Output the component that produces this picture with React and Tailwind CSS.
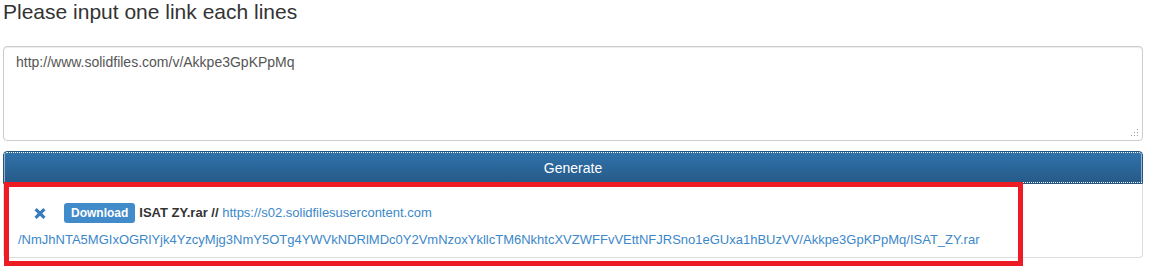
import React from "react";

const FONT = "font-['Liberation_Sans',Arial,sans-serif]";

function RemoveIcon() {
  return (
    <svg width="12" height="11" viewBox="0 0 12 11" className="shrink-0">
      <path d="M1.6 1.2 L10.4 9.8 M10.4 1.2 L1.6 9.8" stroke="#3a7bbd" strokeWidth="3.2" strokeLinecap="butt" fill="none" />
    </svg>
  );
}

function Grip() {
  return (
    <svg width="8" height="8" viewBox="0 0 8 8" className="absolute right-[4px] bottom-[4px] pointer-events-none">
      <g fill="#999">
        <rect x="6" y="0" width="1" height="1" />
        <rect x="3" y="3" width="1" height="1" />
        <rect x="6" y="3" width="1" height="1" />
        <rect x="0" y="6" width="1" height="1" />
        <rect x="3" y="6" width="1" height="1" />
        <rect x="6" y="6" width="1" height="1" />
      </g>
    </svg>
  );
}

export default function App() {
  return (
    <div className={`relative w-[1151px] h-[268px] bg-white pl-[3px] pr-[8px] ${FONT} text-[#333]`}>
      <h3 className="m-0 text-[21px] leading-[24px] font-normal text-[#333]">Please input one link each lines</h3>

      <div className="relative mt-[22px]">
        <textarea
          readOnly
          defaultValue="http://www.solidfiles.com/v/Akkpe3GpKPpMq"
          className={`block w-full h-[95px] resize-none rounded-[4px] border border-[#ccc] bg-white px-[12px] pt-[5px] text-[14px] leading-[20px] text-[#555] shadow-[inset_0_1px_1px_rgba(0,0,0,0.075)] outline-none ${FONT}`}
        />
        <Grip />
      </div>

      <button
        type="button"
        className={`mt-[10px] block w-full h-[33px] rounded-t-[4px] border border-[#245580] bg-[linear-gradient(to_bottom,#3072ab_0%,#265a88_100%)] text-white text-[14px] leading-[20px] outline-dotted outline-1 outline-white -outline-offset-2 ${FONT}`}
      >
        Generate
      </button>

      <div className="h-[74px] border border-t-0 border-[#ddd] rounded-b-[4px] bg-white pl-[14px] pt-[19px]">
        <div className="flex items-center h-[20px] pl-[16px]">
          <RemoveIcon />
          <span className="ml-[18px] inline-flex items-center h-[20px] px-[7px] rounded-[3px] bg-[#428bca] text-white text-[12px] font-bold leading-[20px]">
            Download
          </span>
          <span className="ml-[4px] text-[13px] leading-[20px] font-bold text-[#333] whitespace-pre">ISAT ZY.rar // </span>
          <a className="text-[13px] leading-[20px] text-[#3c87c9] whitespace-pre">https://s02.solidfilesusercontent.com</a>
        </div>
        <div className="mt-[7px] text-[13px] leading-[20px] text-[#3c87c9] whitespace-nowrap">
          <a>/NmJhNTA5MGIxOGRlYjk4YzcyMjg3NmY5OTg4YWVkNDRlMDc0Y2VmNzoxYkllcTM6NkhtcXVZWFFvVEttNFJRSno1eGUxa1hBUzVV/Akkpe3GpKPpMq/ISAT_ZY.rar</a>
        </div>
      </div>

      <div className="absolute left-[4px] top-[182px] w-[1019px] h-[84px] border-[5px] border-[#ed1c24] pointer-events-none" />
    </div>
  );
}
